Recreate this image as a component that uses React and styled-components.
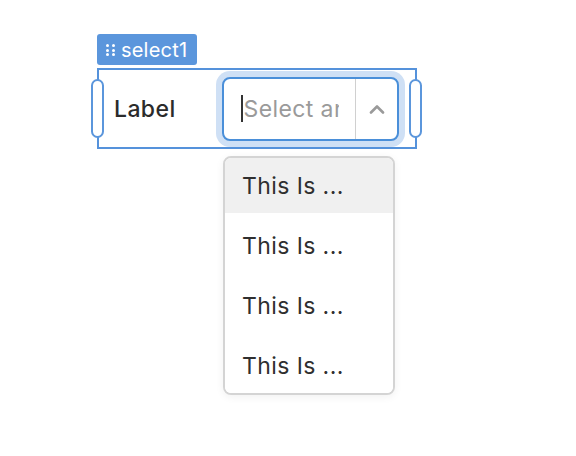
import React from 'react';
import styled, { createGlobalStyle } from 'styled-components';

const GlobalStyle = createGlobalStyle`
  html, body {
    margin: 0;
    padding: 0;
    background: #ffffff;
    font-family: 'Inter', 'Noto Sans', sans-serif;
  }
`;

const Page = styled.div`
  width: 576px;
  height: 456px;
  padding: 34px 0 0 97px;
  box-sizing: border-box;
`;

const Widget = styled.div`
  position: relative;
  width: 320px;
`;

const Tag = styled.div`
  display: flex;
  align-items: center;
  gap: 6px;
  width: fit-content;
  height: 31px;
  padding: 0 10px 0 9px;
  box-sizing: border-box;
  background: #5b96dc;
  border-radius: 3px;
  color: #ffffff;
  font-size: 20px;
  letter-spacing: 0.2px;
  margin-bottom: 3px;
`;

const Grip = styled.span`
  display: grid;
  grid-template-columns: repeat(2, 3px);
  grid-template-rows: repeat(3, 3px);
  gap: 1.5px 3px;
  margin-top: 1px;

  i {
    width: 3px;
    height: 3px;
    border-radius: 50%;
    background: #ffffff;
  }
`;

const Box = styled.div`
  position: relative;
  height: 81px;
  box-sizing: border-box;
  border: 2px solid #5592db;
  display: flex;
  align-items: center;
  padding-left: 15px;
`;

const Handle = styled.span`
  position: absolute;
  top: 9px;
  ${(p) => (p.side === 'left' ? 'left: -8px;' : 'right: -7px;')}
  width: 13px;
  height: 59px;
  box-sizing: border-box;
  border: 2px solid #5b96dc;
  border-radius: 7px;
  background: #ffffff;
`;

const Label = styled.span`
  width: 108px;
  font-size: 23px;
  font-weight: 500;
  letter-spacing: 0.4px;
  color: #2b2b2b;
`;

const Select = styled.div`
  display: flex;
  width: 177px;
  height: 64px;
  box-sizing: border-box;
  border: 2px solid #4a8fd9;
  border-radius: 8px;
  box-shadow: 0 0 0 6px #cfe0f5;
  background: #ffffff;
`;

const Field = styled.div`
  flex: 1;
  min-width: 0;
  display: flex;
  align-items: center;
  padding: 0 16px 0 17px;
  font-size: 23px;
  letter-spacing: 0.4px;
  color: #9a9a9a;
`;

const Caret = styled.span`
  flex: none;
  width: 1.5px;
  height: 27px;
  background: #333333;
  margin-right: 1px;
`;

const Placeholder = styled.span`
  overflow: hidden;
  white-space: nowrap;
`;

const Toggle = styled.div`
  width: 41px;
  border-left: 1px solid #d0d0d0;
  display: flex;
  align-items: center;
  justify-content: center;
`;

const Menu = styled.div`
  position: absolute;
  top: 122px;
  left: 126px;
  width: 172px;
  box-sizing: border-box;
  border: 2px solid #d4d4d4;
  border-radius: 8px;
  background: #ffffff;
  box-shadow: 0 2px 8px rgba(0, 0, 0, 0.06);
  display: flex;
  flex-direction: column;
  gap: 5px;
  overflow: hidden;
`;

const Item = styled.div`
  height: 55px;
  display: flex;
  align-items: center;
  padding-left: 17px;
  font-size: 23px;
  letter-spacing: 0.4px;
  color: #2f2f2f;
  background: ${(p) => (p.active ? '#f0f0f0' : '#ffffff')};
`;

const items = ['This Is ...', 'This Is ...', 'This Is ...', 'This Is ...'];

export default function App() {
  return (
    <>
      <GlobalStyle />
      <Page>
        <Widget>
          <Tag>
            <Grip>
              <i /><i /><i /><i /><i /><i />
            </Grip>
            select1
          </Tag>
          <Box>
            <Handle side="left" />
            <Label>Label</Label>
            <Select>
              <Field>
                <Caret />
                <Placeholder>Select an option</Placeholder>
              </Field>
              <Toggle>
                <svg width="16" height="10" viewBox="0 0 16 10">
                  <path
                    d="M2 8.5 L8 2.5 L14 8.5"
                    fill="none"
                    stroke="#9a9a9a"
                    strokeWidth="2.6"
                    strokeLinecap="round"
                    strokeLinejoin="round"
                  />
                </svg>
              </Toggle>
            </Select>
            <Handle side="right" />
          </Box>
          <Menu>
            {items.map((t, i) => (
              <Item key={i} active={i === 0}>
                {t}
              </Item>
            ))}
          </Menu>
        </Widget>
      </Page>
    </>
  );
}
